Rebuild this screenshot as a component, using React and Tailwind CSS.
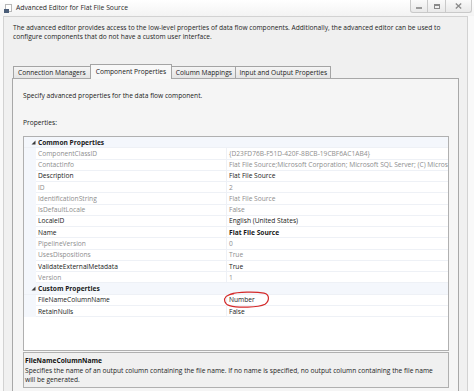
import React from "react";

const rows = [
  { cat: "Common Properties" },
  { n: "ComponentClassID", v: "{D23FD76B-F51D-420F-8BCB-19CBF6AC1AB4}", g: true },
  { n: "ContactInfo", v: "Flat File Source;Microsoft Corporation; Microsoft SQL Server; (C) Microsoft Corporation; All Rights Reserved; http://www.microsoft.com/sql/support;1", g: true },
  { n: "Description", v: "Flat File Source" },
  { n: "ID", v: "2", g: true },
  { n: "IdentificationString", v: "Flat File Source", g: true },
  { n: "IsDefaultLocale", v: "False", g: true },
  { n: "LocaleID", v: "English (United States)" },
  { n: "Name", v: "Flat File Source", b: true },
  { n: "PipelineVersion", v: "0", g: true },
  { n: "UsesDispositions", v: "True", g: true },
  { n: "ValidateExternalMetadata", v: "True" },
  { n: "Version", v: "1", g: true },
  { cat: "Custom Properties" },
  { n: "FileNameColumnName", v: "Number", mark: true },
  { n: "RetainNulls", v: "False" },
];

function Triangle() {
  return (
    <svg width="5" height="5" viewBox="0 0 5 5" className="block">
      <path d="M4.5 0.5 L4.5 4.5 L0.5 4.5 Z" fill="#3a3a3a" />
    </svg>
  );
}

function Row({ r }) {
  if (r.cat) {
    return (
      <div className="flex h-[11.27px] items-center bg-[#f4f7fc] border-b border-[#eef1f6]">
        <div className="w-[14px] flex justify-end pr-[2px]">
          <Triangle />
        </div>
        <span className="font-bold text-[#1a1a1a]">{r.cat}</span>
      </div>
    );
  }
  const color = r.g ? "text-[#8e8e8e]" : "text-[#1a1a1a]";
  return (
    <div className="flex h-[11.27px] w-full">
      <div className="w-[12px] shrink-0 bg-[#f4f7fc]" />
      <div className={`w-[191px] shrink-0 pl-[2px] flex items-center border-b border-r border-[#eef1f6] ${color}`}>
        {r.n}
      </div>
      <div className={`flex-1 min-w-0 pl-[2px] flex items-center border-b border-[#eef1f6] whitespace-nowrap overflow-hidden ${color} ${r.b ? "font-bold" : ""}`}>
        {r.v}
      </div>
    </div>
  );
}

export default function App() {
  return (
    <div
      className="w-[474px] h-[391px] overflow-hidden bg-[#f9f9f9] flex flex-col text-[6.65px] leading-[9px] text-[#1a1a1a]"
      style={{ fontFamily: '"Open Sans", "Noto Sans", sans-serif' }}
    >
      {/* Title bar */}
      <div className="h-[16px] shrink-0 flex items-start justify-between bg-gradient-to-b from-[#ffffff] to-[#f3f3f3]">
        <div className="flex items-center h-[15px] pl-[4px] gap-[3px]">
          <svg width="9" height="9" viewBox="0 0 9 9" className="block mt-[2px]">
            <rect x="1.5" y="0.5" width="6" height="7" fill="#fdfdfd" stroke="#b8b8b8" />
            <rect x="0" y="5" width="5" height="4" fill="#4a5d78" />
          </svg>
          <span className="text-[#2a2a2a] text-[6.8px]">Advanced Editor for Flat File Source</span>
        </div>
        <div className="flex mr-[2px]">
          <div className="w-[18px] h-[13px] border border-t-0 border-[#c9c9c9] rounded-bl-[3px] bg-gradient-to-b from-[#fafafa] to-[#e9e9e9] flex items-center justify-center">
            <div className="w-[6px] h-[2px] border border-[#9a9a9a] mt-[4px]" />
          </div>
          <div className="w-[18px] h-[13px] border border-t-0 border-l-0 border-[#c9c9c9] bg-gradient-to-b from-[#fafafa] to-[#e9e9e9] flex items-center justify-center">
            <div className="w-[6px] h-[5px] border border-t-2 border-[#8a8a8a]" />
          </div>
          <div className="w-[26px] h-[13px] border border-t-0 border-l-0 border-[#c9c9c9] rounded-br-[3px] bg-gradient-to-b from-[#fafafa] to-[#e9e9e9] flex items-center justify-center">
            <svg width="7" height="6" viewBox="0 0 7 6" className="block">
              <path d="M0.8 0.5 L6.2 5.5 M6.2 0.5 L0.8 5.5" stroke="#8a8a8a" strokeWidth="1.3" />
            </svg>
          </div>
        </div>
      </div>

      {/* Window body */}
      <div className="flex-1 flex min-h-0">
        <div className="w-[3px] shrink-0" />
        <div className="flex-1 min-w-0 bg-[#f0f0f0] border border-b-0 border-[#d2d2d2] flex flex-col">
          <div className="pl-[9px] pt-[6px] text-[#1e1e1e]">
            <p>The advanced editor provides access to the low-level properties of data flow components. Additionally, the advanced editor can be used to</p>
            <p>configure components that do not have a custom user interface.</p>
          </div>

          {/* Tabs */}
          <div className="flex items-end h-[15px] mt-[22px] pl-[9px]">
            <div className="h-[12px] px-[4px] flex items-center border border-b-0 border-[#a4a4a4] bg-gradient-to-b from-[#f5f5f5] to-[#e4e4e4]">
              Connection Managers
            </div>
            <div className="h-[15px] px-[5px] -ml-[1px] -mr-[1px] pb-[2px] flex items-center border border-b-0 border-[#a4a4a4] bg-[#f8f8f8] relative z-10 -mb-[1px]">
              Component Properties
            </div>
            <div className="h-[12px] px-[3.5px] flex items-center border border-b-0 border-[#a4a4a4] bg-gradient-to-b from-[#f5f5f5] to-[#e4e4e4]">
              Column Mappings
            </div>
            <div className="h-[12px] px-[3px] flex items-center border border-b-0 border-l-0 border-[#a4a4a4] bg-gradient-to-b from-[#f5f5f5] to-[#e4e4e4]">
              Input and Output Properties
            </div>
          </div>

          {/* Tab panel */}
          <div className="flex-1 ml-[8px] mr-[8px] border border-b-0 border-[#a8a8a8] bg-[#f5f5f5] pl-[10px] pr-[9px] pt-[12px] flex flex-col">
            <p>Specify advanced properties for the data flow component.</p>
            <p className="mt-[18px]">Properties:</p>

            {/* Property grid */}
            <div className="mt-[9px] h-[215px] border border-[#b0b0b0] bg-white flex flex-col relative overflow-hidden">
              {rows.map((r, i) => (
                <Row key={i} r={r} />
              ))}
              <svg
                width="50"
                height="18"
                viewBox="0 0 50 18"
                className="absolute left-[198px] top-[154px]"
              >
                <path
                  d="M8 3.2 C16 0.8 34 0.6 42 2.2 C48 3.6 47.5 10 43 13.2 C36 16.6 16 17 7.5 14.6 C2 13 1.5 8 4.2 5.4 C6 4 8.5 3 12 2.6"
                  fill="none"
                  stroke="#d42a2a"
                  strokeWidth="1.2"
                />
              </svg>
            </div>

            {/* Help panel */}
            <div className="mt-[1px] h-[36px] border border-[#b0b0b0] bg-[#f0f0f0] px-[1px] pt-[3px] leading-[9.5px]">
              <p className="font-bold text-[#111]">FileNameColumnName</p>
              <p className="text-[#1e1e1e]">Specifies the name of an output column containing the file name. If no name is specified, no output column containing the file name</p>
              <p className="text-[#1e1e1e]">will be generated.</p>
            </div>
          </div>
        </div>
        <div className="w-[6px] shrink-0" />
      </div>
    </div>
  );
}
